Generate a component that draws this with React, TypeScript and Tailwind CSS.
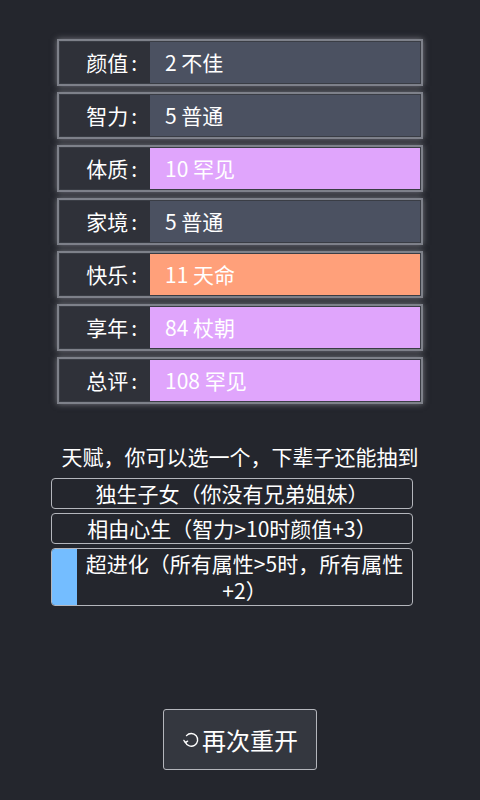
import { ReactNode } from 'react';

const stats = [
  { label: '颜值', value: '2 不佳', color: 'bg-[#4b5161]' },
  { label: '智力', value: '5 普通', color: 'bg-[#4b5161]' },
  { label: '体质', value: '10 罕见', color: 'bg-[#e0a5fc]' },
  { label: '家境', value: '5 普通', color: 'bg-[#4b5161]' },
  { label: '快乐', value: '11 天命', color: 'bg-[#ffa07a]' },
  { label: '享年', value: '84 杖朝', color: 'bg-[#e0a5fc]' },
  { label: '总评', value: '108 罕见', color: 'bg-[#e0a5fc]' },
];

function Talent({ children, picked }: { children: ReactNode; picked?: boolean }) {
  return (
    <div className="flex border border-[#b4b6bc] rounded-[4px] overflow-hidden">
      {picked && <div className="w-[25px] shrink-0 bg-[#74bdff]" />}
      <div className="flex-1 px-[2px] py-[1px] text-center text-[21px] leading-[27px] text-white">{children}</div>
    </div>
  );
}

function RestartIcon() {
  return (
    <svg width="18" height="18" viewBox="0 0 24 24" fill="none" stroke="white" strokeWidth="1.8" strokeLinecap="round" strokeLinejoin="round">
      <path d="M4.5 15 A8.5 8.5 0 1 0 6 6.2" />
      <path d="M2.5 12.5 L4.5 15.5 L7.5 13.5" />
    </svg>
  );
}

export default function App() {
  return (
    <div
      lang="zh-CN"
      className="w-[480px] h-[800px] bg-[#24262d] overflow-hidden flex flex-col"
      style={{ fontFamily: '"Noto Sans CJK SC", Roboto, "Noto Sans", sans-serif' }}
    >
      <div className="w-[366px] mx-auto mt-[39px] flex flex-col gap-[6px]">
        {stats.map((s) => (
          <div
            key={s.label}
            className="h-[47px] flex border-2 border-[#7e818a] shadow-[0_0_6px_rgba(200,202,210,0.5)] p-[1px] bg-[#3a3d45]"
          >
            <div className="w-[90px] shrink-0 bg-[#2f3139] flex items-center justify-end pr-[13px] text-[21px] text-white">
              {s.label}
              <span className="ml-[3px]">:</span>
            </div>
            <div className={`flex-1 ${s.color} flex items-center pl-[15px] text-[21px] text-white`}>{s.value}</div>
          </div>
        ))}
      </div>

      <div className="mt-[38px] text-center text-[21px] leading-[28px] text-white">天赋，你可以选一个，下辈子还能抽到</div>

      <div className="ml-[51px] w-[362px] mt-[8px] flex flex-col gap-[4px]">
        <Talent>独生子女（你没有兄弟姐妹）</Talent>
        <Talent>相由心生（智力&gt;10时颜值+3）</Talent>
        <Talent picked>超进化（所有属性&gt;5时，所有属性+2）</Talent>
      </div>

      <div className="mt-auto mb-[30px] mx-auto w-[154px] h-[61px] border border-[#b4b6bc] rounded-[3px] bg-[#34373f] flex items-center justify-center gap-[2px] text-[24px] text-white">
        <RestartIcon />
        <span>再次重开</span>
      </div>
    </div>
  );
}
